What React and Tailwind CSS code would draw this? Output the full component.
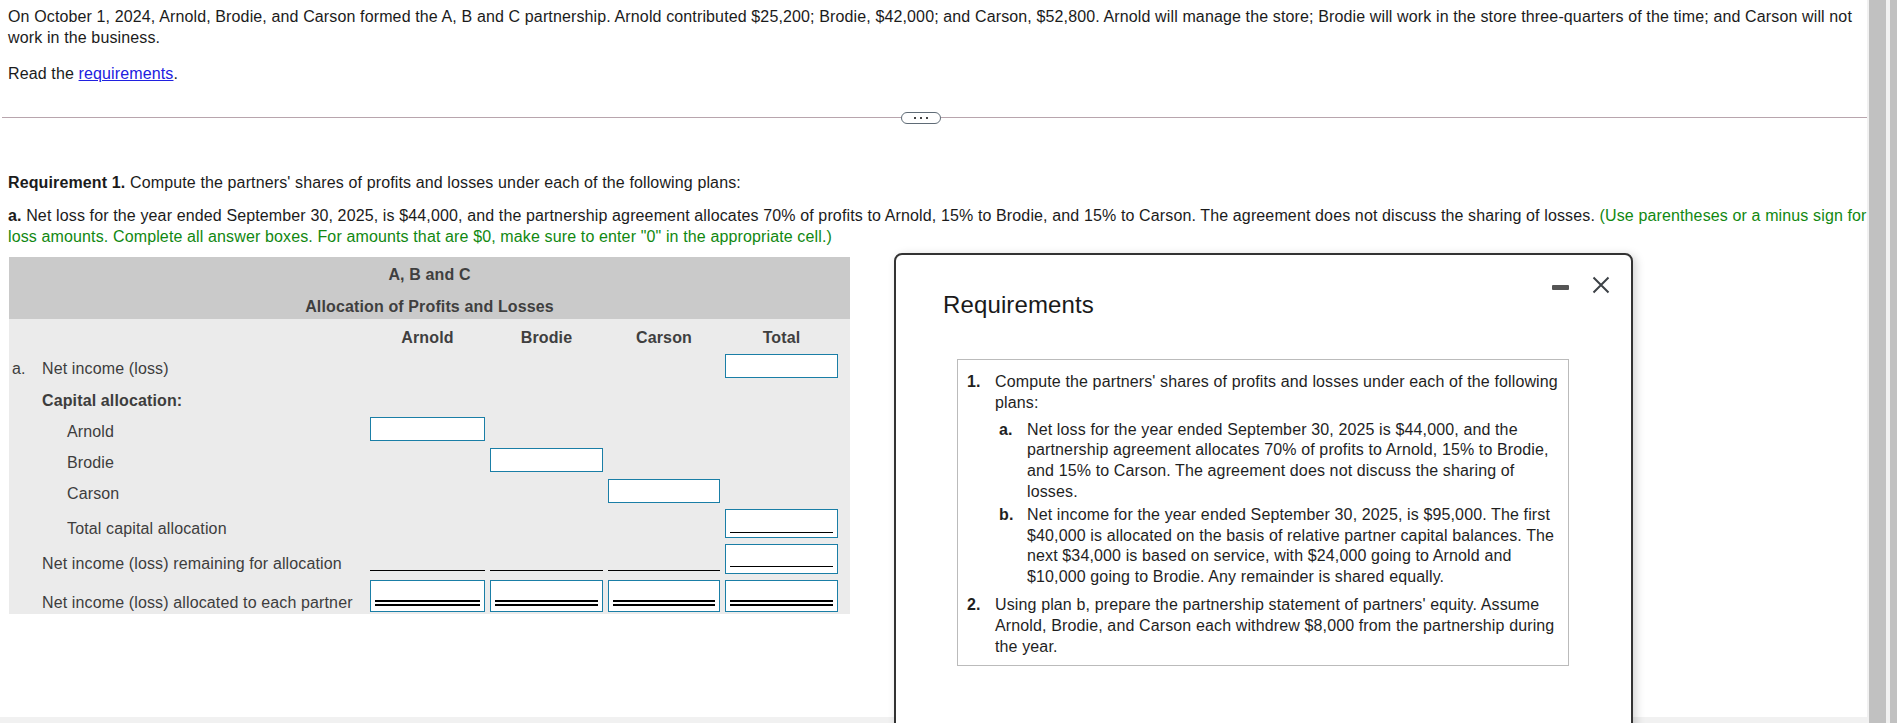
import React from 'react'

const row = "grid grid-cols-[356px_115px_113px_112px_113px] gap-x-[5px]"

const Box = ({ h = "h-[24px]" }) => (
    <div className={`${h} border border-[#1a7ea6] bg-white`}></div>
)

const SingleBox = ({ h, pb }) => (
    <div className={`${h} ${pb} flex flex-col justify-end px-[4px] border border-[#1a7ea6] bg-white`}>
        <div className="h-px bg-black"></div>
    </div>
)

const DoubleBox = () => (
    <div className="h-[32px] pb-[5px] flex flex-col justify-end px-[4px] border border-[#1a7ea6] bg-white">
        <div className="h-[6px] border-y-2 border-black"></div>
    </div>
)

const Label = ({ pt, pl, bold, children }) => (
    <div className={`${pt} ${pl} leading-[22px] text-[#3d3d3d] whitespace-nowrap ${bold ? "font-bold" : ""}`}>{children}</div>
)

const Requirements = () => {
    return (
        <div className="absolute left-[894px] top-[253px] w-[739px] h-[520px] bg-white border-2 border-[#333] rounded-[8px] shadow-[3px_2px_10px_rgba(0,0,0,0.18)]">
            {/* header */}
            <div className="flex items-start justify-between pl-[47px] pr-[21px] pt-[21px]">
                <h2 className="mt-[15px] text-[24px] leading-[28px] text-[#1a1a1a]">Requirements</h2>
                <div className="flex items-start gap-[23px]">
                    <div className="mt-[9px] w-[17px] h-[5px] rounded-[1px] bg-[#555]"></div>
                    <svg width="18" height="18" viewBox="0 0 18 18">
                        <path d="M1.5 1.5 L16.5 16.5 M16.5 1.5 L1.5 16.5" stroke="#3d4247" strokeWidth="2" fill="none" />
                    </svg>
                </div>
            </div>

            <div className="ml-[61px] mt-[40px] w-[612px] border border-[#bbbbbb] pl-[9px] pr-[7px] pt-[12px] pb-[8px] text-[16px] leading-[20.8px] text-[#1f1f1f]">
                <div className="flex">
                    <span className="w-[28px] shrink-0 font-bold">1.</span>
                    <div>
                        <p>Compute the partners' shares of profits and losses under each of the following plans:</p>
                        <div className="ml-[4px] mt-[6px]">
                            <div className="flex">
                                <span className="w-[28px] shrink-0 font-bold">a.</span>
                                <p>Net loss for the year ended September 30, 2025 is $44,000, and the partnership agreement allocates 70% of profits to Arnold, 15% to Brodie, and 15% to Carson. The agreement does not discuss the sharing of losses.</p>
                            </div>
                            <div className="flex mt-[2px]">
                                <span className="w-[28px] shrink-0 font-bold">b.</span>
                                <p>Net income for the year ended September 30, 2025, is $95,000. The first $40,000 is allocated on the basis of relative partner capital balances. The next $34,000 is based on service, with $24,000 going to Arnold and $10,000 going to Brodie. Any remainder is shared equally.</p>
                            </div>
                        </div>
                    </div>
                </div>
                <div className="flex mt-[7px]">
                    <span className="w-[28px] shrink-0 font-bold">2.</span>
                    <p>Using plan b, prepare the partnership statement of partners' equity. Assume Arnold, Brodie, and Carson each withdrew $8,000 from the partnership during the year.</p>
                </div>
            </div>
        </div>
    )
}

const App = () => {
    return (
        <div className="relative flex h-[723px] w-[1897px] overflow-hidden bg-white font-['Liberation_Sans',Arial,sans-serif] text-[16px] tracking-[0.13px]">
            <div className="w-[1867px] flex flex-col overflow-hidden">
                <div className="flex-1">
                    <p className="pl-[8px] pt-[6px] leading-[21.3px] text-[#1b1b1b] whitespace-nowrap">
                        On October 1, 2024, Arnold, Brodie, and Carson formed the A, B and C partnership. Arnold contributed $25,200; Brodie, $42,000; and Carson, $52,800. Arnold will manage the store; Brodie will work in the store three-quarters of the time; and Carson will not<br />
                        work in the business.
                    </p>
                    <p className="pl-[8px] mt-[14px] leading-[21.3px] text-[#1b1b1b]">
                        Read the <a href="#" className="text-[#2020e0] underline">requirements</a>.
                    </p>

                    {/* divider */}
                    <div className="mt-[28px] ml-[2px] flex items-center h-[12px]">
                        <div className="w-[899px] h-px bg-[#b8a5ad]"></div>
                        <button className="w-[40px] h-[12px] rounded-full border border-[#5f6b76] bg-white flex items-center justify-center gap-[4px]">
                            <span className="w-[2px] h-[2px] bg-[#444]"></span>
                            <span className="w-[2px] h-[2px] bg-[#444]"></span>
                            <span className="w-[2px] h-[2px] bg-[#444]"></span>
                        </button>
                        <div className="flex-1 h-px bg-[#b8a5ad]"></div>
                    </div>

                    <p className="pl-[8px] mt-[48px] leading-[21.3px] text-[#1b1b1b]">
                        <b>Requirement 1.</b> Compute the partners' shares of profits and losses under each of the following plans:
                    </p>
                    <p className="pl-[8px] mt-[12px] leading-[21.3px] text-[#1b1b1b] whitespace-nowrap">
                        <b>a.</b> Net loss for the year ended September 30, 2025, is $44,000, and the partnership agreement allocates 70% of profits to Arnold, 15% to Brodie, and 15% to Carson. The agreement does not discuss the sharing of losses. <span className="text-[#118811]">(Use parentheses or a minus sign for<br />
                        loss amounts. Complete all answer boxes. For amounts that are $0, make sure to enter "0" in the appropriate cell.)</span>
                    </p>

                    {/* table */}
                    <div className="ml-[9px] mt-[9px] w-[841px]">
                        <div className="h-[62px] bg-[#cacaca] pt-[7px] text-center font-bold text-[#3f3f3f]">
                            <div className="leading-[22px]">A, B and C</div>
                            <div className="mt-[10px] leading-[22px]">Allocation of Profits and Losses</div>
                        </div>
                        <div className="bg-[#ebebeb]">
                            <div className={`${row} h-[35px] pt-[8px] font-bold text-[#3f3f3f] text-center leading-[22px]`}>
                                <div></div>
                                <div>Arnold</div>
                                <div>Brodie</div>
                                <div>Carson</div>
                                <div>Total</div>
                            </div>

                            <div className={`${row} h-[32px]`}>
                                <div className="flex pt-[4px] leading-[22px] text-[#3d3d3d]">
                                    <span className="pl-[3px] w-[33px]">a.</span>
                                    <span>Net income (loss)</span>
                                </div>
                                <div></div><div></div><div></div>
                                <Box />
                            </div>

                            <div className={`${row} h-[31px]`}>
                                <Label pt="pt-[4px]" pl="pl-[33px]" bold>Capital allocation:</Label>
                            </div>

                            <div className={`${row} h-[31px]`}>
                                <Label pt="pt-[4px]" pl="pl-[58px]">Arnold</Label>
                                <Box />
                            </div>

                            <div className={`${row} h-[31px]`}>
                                <Label pt="pt-[4px]" pl="pl-[58px]">Brodie</Label>
                                <div></div>
                                <Box />
                            </div>

                            <div className={`${row} h-[30px]`}>
                                <Label pt="pt-[4px]" pl="pl-[58px]">Carson</Label>
                                <div></div><div></div>
                                <Box />
                            </div>

                            <div className={`${row} h-[35px]`}>
                                <Label pt="pt-[9px]" pl="pl-[58px]">Total capital allocation</Label>
                                <div></div><div></div><div></div>
                                <SingleBox h="h-[29px]" pb="pb-[4px]" />
                            </div>

                            <div className={`${row} h-[36px]`}>
                                <Label pt="pt-[9px]" pl="pl-[33px]">Net income (loss) remaining for allocation</Label>
                                <div className="pt-[26px]"><div className="h-px bg-black"></div></div>
                                <div className="pt-[26px]"><div className="h-px bg-black"></div></div>
                                <div className="pt-[26px]"><div className="h-px bg-black"></div></div>
                                <SingleBox h="h-[30px]" pb="pb-[6px]" />
                            </div>

                            <div className={`${row} h-[34px]`}>
                                <Label pt="pt-[12px]" pl="pl-[33px]">Net income (loss) allocated to each partner</Label>
                                <DoubleBox />
                                <DoubleBox />
                                <DoubleBox />
                                <DoubleBox />
                            </div>
                        </div>
                    </div>
                </div>
                <div className="h-[6px] bg-[#f1f1f1]"></div>
            </div>

            {/* scrollbar */}
            <div className="w-[30px] flex">
                <div className="w-[2px] bg-[#f1f1f1]"></div>
                <div className="w-[17px] bg-[#c1c1c1]"></div>
                <div className="w-[4px] bg-[#f1f1f1]"></div>
                <div className="w-[7px] bg-[#c1c1c1]"></div>
            </div>

            <Requirements />
        </div>
    )
}

export default App
